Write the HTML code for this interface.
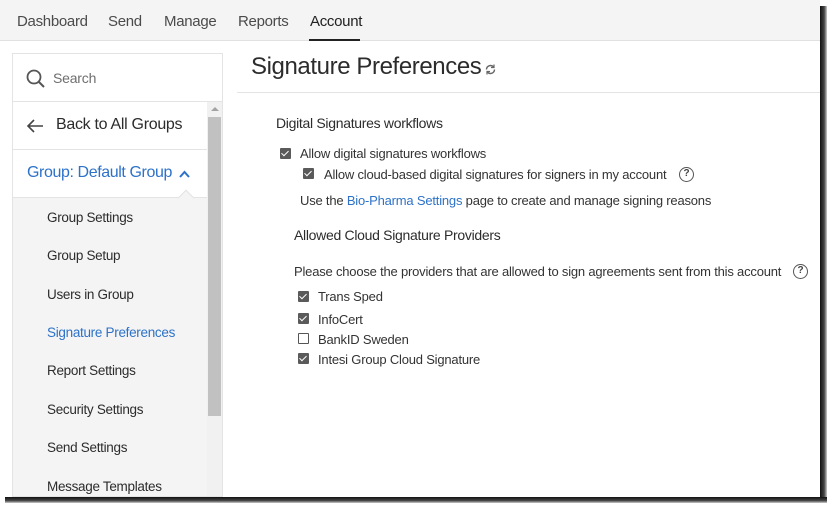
<!DOCTYPE html>
<html><head><meta charset="utf-8"><style>
*{margin:0;padding:0;box-sizing:border-box}
body{width:830px;height:505px;background:#fff;font-family:"Liberation Sans",sans-serif;position:relative;overflow:hidden;color:#2c2c2c}
.a{position:absolute;white-space:nowrap}
.nav{position:absolute;left:0;top:0;width:820px;height:41px;background:#f4f4f4;border-bottom:1px solid #e1e1e1}
.nav span{position:absolute;top:13px;font-size:15px;color:#4b4b4b;letter-spacing:-0.3px}
.side{position:absolute;left:12px;top:53px;width:211px;height:444px;border:1px solid #e4e4e4;background:#f4f4f4;overflow:hidden}
.si{position:absolute;left:34px;font-size:13.5px;color:#2c2c2c;letter-spacing:-0.3px}
.t{font-size:13px;letter-spacing:-0.2px;color:#333}
.cb{position:absolute;width:11px;height:11px;background:#5a5a5a;border-radius:1px}
.cb:after{content:"";position:absolute;left:3px;top:1px;width:3px;height:6px;border:solid #fff;border-width:0 1.5px 1.5px 0;transform:rotate(45deg)}
.cb.off{background:#fff;border:1.5px solid #555}
.cb.off:after{display:none}
.q{position:absolute;width:15px;height:15px;border:1.5px solid #555;border-radius:50%;font-size:10px;font-weight:bold;text-align:center;line-height:12px;color:#444}
</style></head><body>
<div class="nav">
<span style="left:17px">Dashboard</span>
<span style="left:108px">Send</span>
<span style="left:164px">Manage</span>
<span style="left:238px">Reports</span>
<span style="left:310px;color:#222">Account</span>
<div style="position:absolute;left:309px;top:39px;width:51px;height:2px;background:#222"></div>
</div>
<div class="side">
<div style="position:absolute;left:0;top:0;width:211px;height:48px;background:#fff;border-bottom:1px solid #e4e4e4"></div>
<svg class="a" style="left:13px;top:15px" width="20" height="20" viewBox="0 0 20 20"><circle cx="8" cy="8" r="6.5" fill="none" stroke="#555" stroke-width="1.8"/><path d="M13 13l5 5" stroke="#555" stroke-width="2"/></svg>
<span class="a" style="left:40px;top:16px;font-size:14px;color:#6e6e6e;letter-spacing:-0.2px">Search</span>
<div style="position:absolute;left:0;top:48px;width:194px;height:48px;background:#fff;border-bottom:1px solid #e4e4e4"></div>
<svg class="a" style="left:13px;top:64px" width="18" height="16" viewBox="0 0 18 16"><path d="M17 8H2M8 2L2 8l6 6" fill="none" stroke="#444" stroke-width="1.6"/></svg>
<span class="a" style="left:43px;top:62px;font-size:16px;color:#2c2c2c;letter-spacing:-0.3px">Back to All Groups</span>
<div style="position:absolute;left:0;top:96px;width:194px;height:48px;background:#fff;border-bottom:1px solid #e4e4e4"></div>
<span class="a" style="left:14px;top:110px;font-size:16px;color:#2d72c8;letter-spacing:-0.4px">Group: Default Group</span>
<svg class="a" style="left:166px;top:116px" width="11" height="8" viewBox="0 0 11 8"><path d="M1 7l4.5-5L10 7" fill="none" stroke="#2d72c8" stroke-width="2"/></svg>
<div style="position:absolute;left:167px;top:138px;width:12px;height:12px;background:#f4f4f4;border-left:1px solid #e4e4e4;border-top:1px solid #e4e4e4;transform:rotate(45deg)"></div>
<span class="a si" style="top:156px">Group Settings</span>
<span class="a si" style="top:194px">Group Setup</span>
<span class="a si" style="top:233px">Users in Group</span>
<span class="a si" style="top:271px;color:#2d72c8">Signature Preferences</span>
<span class="a si" style="top:309px">Report Settings</span>
<span class="a si" style="top:348px">Security Settings</span>
<span class="a si" style="top:386px">Send Settings</span>
<span class="a si" style="top:425px">Message Templates</span>
<div style="position:absolute;left:194px;top:48px;width:15px;height:400px;background:#f1f1f1"></div>
<div style="position:absolute;left:198px;top:53px;width:0;height:0;border-left:4px solid transparent;border-right:4px solid transparent;border-bottom:4px solid #a3a3a3"></div>
<div style="position:absolute;left:195px;top:63px;width:13px;height:299px;background:#c1c1c1"></div>
</div>
<span class="a" style="left:251px;top:53px;font-size:24px;color:#2c2c2c;letter-spacing:-0.4px">Signature Preferences</span>
<svg class="a" style="left:484px;top:63px" width="13" height="13" viewBox="0 0 13 13"><path d="M2.5 6.5a4 4 0 0 1 7-2.6M10.5 6.5a4 4 0 0 1-7 2.6" fill="none" stroke="#666" stroke-width="1.4"/><path d="M10 1.5v3h-3M3 11.5v-3h3" fill="none" stroke="#666" stroke-width="1.2"/></svg>
<div style="position:absolute;left:237px;top:92px;width:583px;height:1px;background:#e4e4e4"></div>
<span class="a" style="left:276px;top:115px;font-size:14px;letter-spacing:-0.3px;color:#2c2c2c">Digital Signatures workflows</span>
<div class="cb" style="left:280px;top:148px"></div>
<span class="a t" style="left:300px;top:146px">Allow digital signatures workflows</span>
<div class="cb" style="left:303px;top:168px"></div>
<span class="a t" style="left:324px;top:167px">Allow cloud-based digital signatures for signers in my account</span>
<div class="q" style="left:679px;top:167px">?</div>
<span class="a t" style="left:300px;top:193px">Use the <span style="color:#2d72c8">Bio-Pharma Settings</span> page to create and manage signing reasons</span>
<span class="a" style="left:294px;top:227px;font-size:14px;letter-spacing:-0.3px;color:#2c2c2c">Allowed Cloud Signature Providers</span>
<span class="a t" style="left:294px;top:264px">Please choose the providers that are allowed to sign agreements sent from this account</span>
<div class="q" style="left:793px;top:264px">?</div>
<div class="cb" style="left:298px;top:291px"></div>
<span class="a t" style="left:318px;top:289px">Trans Sped</span>
<div class="cb" style="left:298px;top:313px"></div>
<span class="a t" style="left:318px;top:312px">InfoCert</span>
<div class="cb off" style="left:298px;top:333px"></div>
<span class="a t" style="left:318px;top:332px">BankID Sweden</span>
<div class="cb" style="left:298px;top:353px"></div>
<span class="a t" style="left:318px;top:352px">Intesi Group Cloud Signature</span>
<div style="position:absolute;left:820px;top:6px;width:7px;height:496px;background:linear-gradient(90deg,#111,#444 60%,#ccc)"></div>
<div style="position:absolute;left:5px;top:497px;width:822px;height:6px;background:linear-gradient(180deg,#111,#444 60%,#ccc)"></div>
</body></html>
